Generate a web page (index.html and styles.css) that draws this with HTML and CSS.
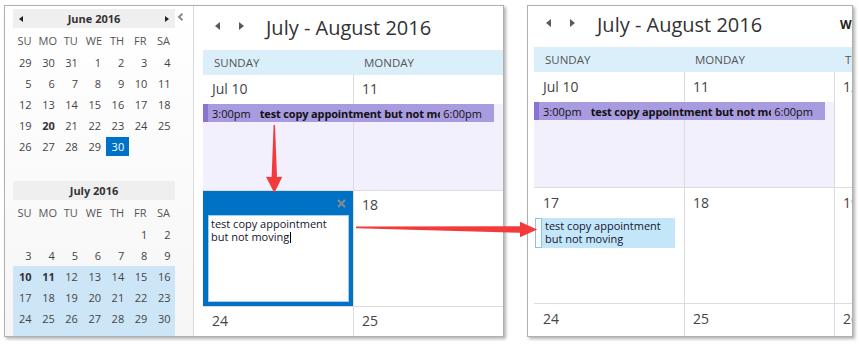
FILE: index.html
```html
<!DOCTYPE html>
<html>
<head>
<meta charset="utf-8">
<title>Calendar</title>
<link rel="stylesheet" href="styles.css">
</head>
<body>
<div class="stage">
  <div class="win win-left">
    <aside class="side">
      <div class="minis">
        <div class="mini">
          <div class="mini-head"><span class="mtri mtri-l"></span><span>June 2016</span><span class="mtri mtri-r"></span></div>
          <div class="mini-days"><span>SU</span><span>MO</span><span>TU</span><span>WE</span><span>TH</span><span>FR</span><span>SA</span></div>
          <div class="mini-week"><span>29</span><span>30</span><span>31</span><span>1</span><span>2</span><span>3</span><span>4</span></div>
          <div class="mini-week"><span>5</span><span>6</span><span>7</span><span>8</span><span>9</span><span>10</span><span>11</span></div>
          <div class="mini-week"><span>12</span><span>13</span><span>14</span><span>15</span><span>16</span><span>17</span><span>18</span></div>
          <div class="mini-week"><span>19</span><span class="b">20</span><span>21</span><span>22</span><span>23</span><span>24</span><span>25</span></div>
          <div class="mini-week"><span>26</span><span>27</span><span>28</span><span>29</span><span class="sel">30</span><span></span><span></span></div>
          <div class="mini-week"></div>
        </div>
        <div class="mini">
          <div class="mini-head mini-head-c"><span>July 2016</span></div>
          <div class="mini-days"><span>SU</span><span>MO</span><span>TU</span><span>WE</span><span>TH</span><span>FR</span><span>SA</span></div>
          <div class="mini-week"><span></span><span></span><span></span><span></span><span></span><span>1</span><span>2</span></div>
          <div class="mini-week"><span>3</span><span>4</span><span>5</span><span>6</span><span>7</span><span>8</span><span>9</span></div>
          <div class="mini-week hl"><span class="b">10</span><span class="b">11</span><span>12</span><span>13</span><span>14</span><span>15</span><span>16</span></div>
          <div class="mini-week hl"><span>17</span><span>18</span><span>19</span><span>20</span><span>21</span><span>22</span><span>23</span></div>
          <div class="mini-week hl"><span>24</span><span>25</span><span>26</span><span>27</span><span>28</span><span>29</span><span>30</span></div>
          <div class="mini-week hl"></div>
        </div>
      </div>
      <svg class="collapse" width="7" height="8" viewBox="0 0 7 8"><polyline points="5.5,0.8 2,4 5.5,7.2" fill="none" stroke="#8a8a8a" stroke-width="2"/></svg>
    </aside>

    <main class="cal">
      <header class="cal-head">
        <span class="nav nav-l"></span><span class="nav nav-r"></span>
        <h1 class="cal-title">July - August 2016</h1>
      </header>
      <div class="days"><div class="dname">SUNDAY</div><div class="dname">MONDAY</div></div>
      <div class="week">
        <div class="day c1 lav"><div class="date">Jul 10</div></div>
        <div class="day c2 lav"><div class="date">11</div></div>
        <div class="event"><span class="ev-strip"></span><span class="ev-start">3:00pm</span><span class="ev-title">test copy appointment but not moving</span><span class="ev-end">6:00pm</span></div>
      </div>
      <div class="week">
        <div class="day c1 sel-cell">
          <div class="sel-top"><svg width="9" height="9" viewBox="0 0 9 9"><path d="M1 1 L8 8 M8 1 L1 8" stroke="#8b8b8b" stroke-width="2"/></svg></div>
          <div class="sel-box">test copy appointment<br>but not moving<span class="caret"></span></div>
        </div>
        <div class="day c2"><div class="date">18</div></div>
      </div>
      <div class="week week-last">
        <div class="day c1"><div class="date">24</div></div>
        <div class="day c2"><div class="date">25</div></div>
      </div>
    </main>
  </div>

  <div class="win win-right">
    <main class="cal">
      <header class="cal-head">
        <span class="nav nav-l"></span><span class="nav nav-r"></span>
        <h1 class="cal-title title-fixed">July - August 2016</h1>
        <span class="weather">Washington, D.C.</span>
      </header>
      <div class="days"><div class="dname">SUNDAY</div><div class="dname">MONDAY</div><div class="dname">TUESDAY</div></div>
      <div class="week">
        <div class="day c1 lav"><div class="date">Jul 10</div></div>
        <div class="day c2 lav"><div class="date">11</div></div>
        <div class="day c3"><div class="date">12</div></div>
        <div class="event"><span class="ev-strip"></span><span class="ev-start">3:00pm</span><span class="ev-title">test copy appointment but not moving</span><span class="ev-end">6:00pm</span></div>
      </div>
      <div class="week">
        <div class="day c1">
          <div class="date">17</div>
          <div class="appt"><span class="appt-strip"></span><span class="appt-text">test copy appointment<br>but not moving</span></div>
        </div>
        <div class="day c2"><div class="date">18</div></div>
        <div class="day c3"><div class="date">19</div></div>
      </div>
      <div class="week week-last">
        <div class="day c1"><div class="date">24</div></div>
        <div class="day c2"><div class="date">25</div></div>
        <div class="day c3"><div class="date">26</div></div>
      </div>
    </main>
  </div>
</div>

<svg class="arrows" width="859" height="345" viewBox="0 0 859 345">
  <polygon points="273.6,125 275,125 277,177 282.3,176.7 274.3,193 266,176.7 271.6,177" fill="#f43b3b"/>
  <polygon points="356,226.6 520,226.2 520,221.7 537.2,229.4 520,237.3 520,232.8 356,228.2" fill="#f43b3b"/>
</svg>
</body>
</html>
```

FILE: styles.css
```css
* { box-sizing: border-box; }

html, body {
  margin: 0;
  padding: 0;
  background: #ffffff;
}

body {
  width: 859px;
  height: 345px;
  overflow: hidden;
  position: relative;
  font-family: "Open Sans", "Noto Sans", "DejaVu Sans", sans-serif;
  color: #444;
}

.stage {
  display: flex;
  align-items: flex-start;
  gap: 23px;
  padding: 5px 0 0 4px;
}

.win {
  height: 332px;
  border: 1px solid #b0b0b0;
  box-shadow: 2px 2px 3px rgba(0, 0, 0, 0.3);
  background: #fff;
  overflow: hidden;
  display: flex;
  flex-shrink: 0;
}

.win-left { width: 500px; --dh: 29px; --dp: 5px; }
.win-right { width: 326px; --dh: 30px; --dp: 6px; }

/* ---------- sidebar / mini calendars ---------- */
.side {
  width: 189px;
  flex-shrink: 0;
  display: flex;
  align-items: flex-start;
  padding: 3px 0 0 8px;
  border-right: 1px solid #dadada;
  background: linear-gradient(#ffffff, #f6f6f6);
}

.minis { width: 162px; flex-shrink: 0; }

.mini + .mini { margin-top: 3px; }

.mini-head {
  height: 19px;
  margin-bottom: 2px;
  padding: 0 6px;
  display: flex;
  align-items: center;
  justify-content: space-between;
  background: #efefef;
  font-size: 11px;
  font-weight: 700;
  color: #333;
}

.mini-head-c { justify-content: center; }

.mtri {
  width: 0;
  height: 0;
  border-top: 3.5px solid transparent;
  border-bottom: 3.5px solid transparent;
}
.mtri-l { border-right: 4px solid #222; }
.mtri-r { border-left: 4px solid #222; }

.mini-days, .mini-week {
  display: grid;
  grid-template-columns: repeat(7, 1fr);
  font-size: 11px;
}

.mini-days {
  height: 22px;
  line-height: 22px;
  text-align: center;
  color: #555;
}

.mini-week {
  height: 21px;
  line-height: 21px;
  text-align: right;
  color: #444;
}

.mini-week span { padding-right: 4.5px; }
.mini-week .b { font-weight: 700; color: #333; }
.mini-week .sel {
  height: 19px;
  line-height: 19px;
  margin-top: 1px;
  background: #0072c6;
  color: #fff;
}
.mini-week.hl { background: #cde6f7; }

.collapse { margin: 4px 0 0 2px; flex-shrink: 0; }

/* ---------- main calendar ---------- */
.cal {
  flex: 1;
  min-width: 0;
  display: flex;
  flex-direction: column;
}

.win-left .cal { padding-left: 9px; }
.win-right .cal { padding-left: 6px; }

.cal-head {
  height: 44px;
  flex-shrink: 0;
  display: flex;
  align-items: center;
  padding-left: 12px;
  white-space: nowrap;
}

.win-right .cal-head { height: 41px; padding-bottom: 4px; }

.nav {
  width: 0;
  height: 0;
  flex-shrink: 0;
  margin-bottom: 4px;
  border-top: 4px solid transparent;
  border-bottom: 4px solid transparent;
}
.nav-l { border-right: 5.5px solid #5a5a5a; }
.nav-r { border-left: 5.5px solid #5a5a5a; margin-left: 19px; }

.cal-title {
  margin: 0 0 0 22px;
  font-size: 20px;
  font-weight: 400;
  line-height: 28px;
  color: #333;
  white-space: nowrap;
  flex-shrink: 0;
}

.title-fixed { flex: 0 0 243px; }

.weather {
  font-size: 12px;
  font-weight: 700;
  color: #222;
  flex-shrink: 0;
  margin-bottom: 1px;
}

.days {
  height: 25px;
  flex-shrink: 0;
  display: grid;
  grid-template-columns: repeat(3, 150px);
  background: #dbeffb;
}

.dname {
  padding-left: 11px;
  font-size: 11.5px;
  line-height: 25px;
  color: #555;
  white-space: nowrap;
}

.week {
  height: 116px;
  flex-shrink: 0;
  display: grid;
  grid-template-columns: repeat(3, 150px);
  grid-template-rows: var(--dh) 18px 1fr;
  border-bottom: 1px solid #dcdcdc;
}

.week-last { flex: 1 1 auto; border-bottom: 0; }

.day { grid-row: 1 / -1; min-width: 0; }
.c1 { grid-column: 1; }
.c2 { grid-column: 2; border-left: 1px solid #dcdcdc; }
.c3 { grid-column: 3; border-left: 1px solid #dcdcdc; }

.lav {
  background: linear-gradient(to bottom, transparent var(--dh), #f2f0fd var(--dh));
}

.date {
  height: var(--dh);
  padding: var(--dp) 0 0 9px;
  font-size: 14px;
  line-height: 18px;
  color: #444;
  white-space: nowrap;
}
.c2 .date, .c3 .date { padding-left: 8px; }

/* all-day style event bar */
.event {
  grid-row: 2;
  grid-column: 1 / span 2;
  margin-right: 9px;
  z-index: 1;
  display: flex;
  align-items: center;
  overflow: hidden;
  white-space: nowrap;
  background: #a99be0;
  font-size: 11px;
  color: #111;
}

.ev-strip { width: 5px; align-self: stretch; background: #8a74d2; flex-shrink: 0; }
.ev-start { margin: 0 9px 0 4px; flex-shrink: 0; }
.ev-title { flex: 1; min-width: 0; overflow: hidden; font-weight: 700; letter-spacing: -0.15px; }
.ev-end { margin: 0 12px 0 3px; flex-shrink: 0; }

/* selected / editing cell */
.sel-cell {
  display: flex;
  flex-direction: column;
  padding: 0 4px 4px 5px;
  background: #0072c6;
}

.sel-top {
  height: 24px;
  flex-shrink: 0;
  display: flex;
  align-items: center;
  justify-content: flex-end;
  padding-right: 3px;
}

.sel-box {
  flex: 1;
  padding: 1px 2px;
  background: #fff;
  border: 1px solid #a8cdee;
  font-size: 11px;
  line-height: 13px;
  color: #14142b;
}

.caret {
  display: inline-block;
  width: 1px;
  height: 11px;
  margin-left: 1px;
  vertical-align: -2px;
  background: #000;
}

/* moved appointment */
.appt {
  height: 30px;
  margin: 0 9px 0 1px;
  display: flex;
  background: #c4e6f9;
  font-size: 11px;
  line-height: 13px;
  color: #15152e;
}

.appt-strip {
  width: 7px;
  flex-shrink: 0;
  background: #fff;
  border: 1px solid #8cc3ea;
}

.appt-text { padding: 1px 0 0 3px; white-space: nowrap; }

/* annotation arrows */
.arrows {
  position: absolute;
  top: 0;
  left: 0;
  pointer-events: none;
  z-index: 10;
}
```
